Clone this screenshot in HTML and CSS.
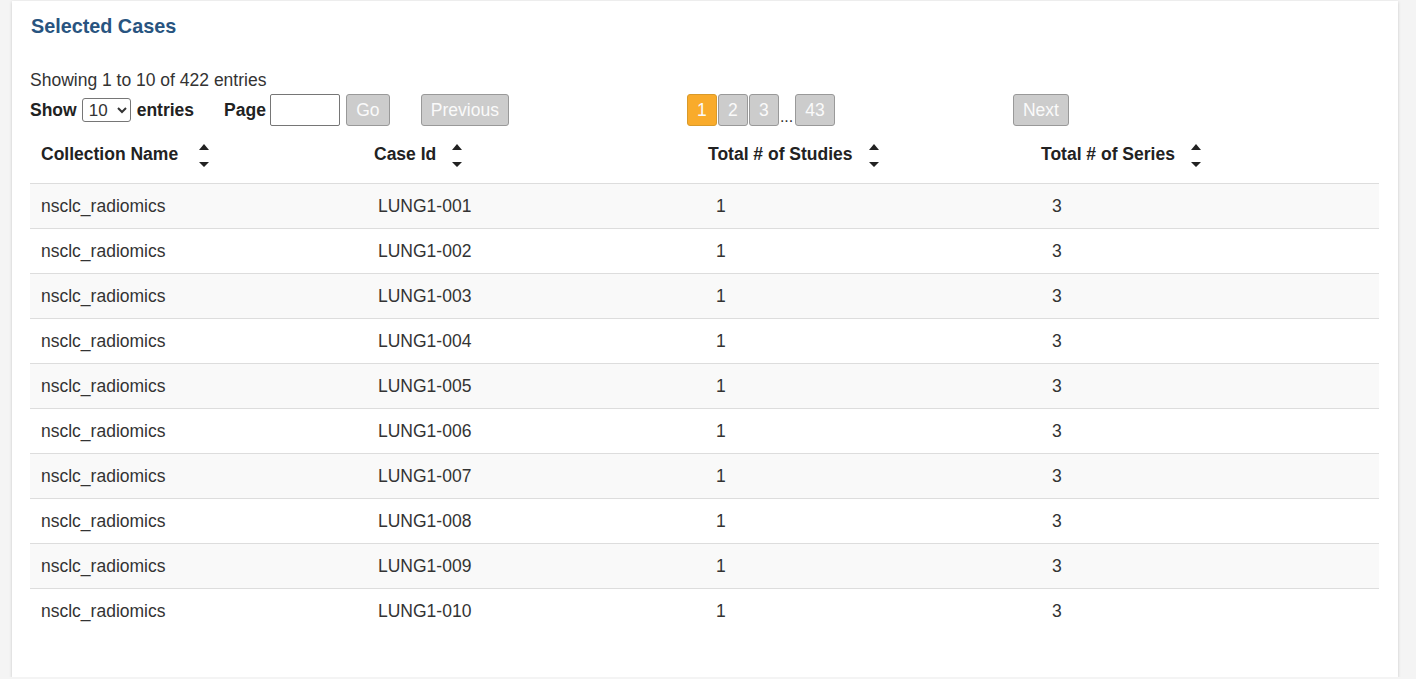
FILE: index.html
```html
<!DOCTYPE html>
<html lang="en">
<head>
<meta charset="utf-8">
<title>Selected Cases</title>
<link rel="stylesheet" href="styles.css">
</head>
<body>
<div class="card">
  <h2 class="title">Selected Cases</h2>
  <div class="info">Showing 1 to 10 of 422 entries</div>
  <div class="controls">
    <label class="lbl">Show</label>
    <select class="len"><option>10</option><option>25</option><option>50</option></select>
    <span class="lbl entries">entries</span>
    <span class="lbl page-lbl">Page</span>
    <input class="page-input" type="text">
    <button class="btn go">Go</button>
    <button class="btn prev">Previous</button>
    <div class="pages">
      <button class="btn pg active">1</button>
      <button class="btn pg">2</button>
      <button class="btn pg">3</button>
      <span class="ellipsis">...</span>
      <button class="btn pg wide">43</button>
    </div>
    <button class="btn next">Next</button>
  </div>
  <div class="table">
    <div class="row head">
      <div class="th c1">Collection Name<svg class="sort s1" width="10" height="24" viewBox="0 0 10 24"><path d="M5 0 L10 6 L0 6 Z M0 18 L10 18 L5 23 Z" fill="#222"/></svg></div>
      <div class="th c2">Case Id<svg class="sort" width="10" height="24" viewBox="0 0 10 24"><path d="M5 0 L10 6 L0 6 Z M0 18 L10 18 L5 23 Z" fill="#222"/></svg></div>
      <div class="th c3">Total # of Studies<svg class="sort" width="10" height="24" viewBox="0 0 10 24"><path d="M5 0 L10 6 L0 6 Z M0 18 L10 18 L5 23 Z" fill="#222"/></svg></div>
      <div class="th c4">Total # of Series<svg class="sort" width="10" height="24" viewBox="0 0 10 24"><path d="M5 0 L10 6 L0 6 Z M0 18 L10 18 L5 23 Z" fill="#222"/></svg></div>
    </div>
    <div class="row"><div class="td">nsclc_radiomics</div><div class="td">LUNG1-001</div><div class="td">1</div><div class="td">3</div></div>
    <div class="row"><div class="td">nsclc_radiomics</div><div class="td">LUNG1-002</div><div class="td">1</div><div class="td">3</div></div>
    <div class="row"><div class="td">nsclc_radiomics</div><div class="td">LUNG1-003</div><div class="td">1</div><div class="td">3</div></div>
    <div class="row"><div class="td">nsclc_radiomics</div><div class="td">LUNG1-004</div><div class="td">1</div><div class="td">3</div></div>
    <div class="row"><div class="td">nsclc_radiomics</div><div class="td">LUNG1-005</div><div class="td">1</div><div class="td">3</div></div>
    <div class="row"><div class="td">nsclc_radiomics</div><div class="td">LUNG1-006</div><div class="td">1</div><div class="td">3</div></div>
    <div class="row"><div class="td">nsclc_radiomics</div><div class="td">LUNG1-007</div><div class="td">1</div><div class="td">3</div></div>
    <div class="row"><div class="td">nsclc_radiomics</div><div class="td">LUNG1-008</div><div class="td">1</div><div class="td">3</div></div>
    <div class="row"><div class="td">nsclc_radiomics</div><div class="td">LUNG1-009</div><div class="td">1</div><div class="td">3</div></div>
    <div class="row"><div class="td">nsclc_radiomics</div><div class="td">LUNG1-010</div><div class="td">1</div><div class="td">3</div></div>
  </div>
</div>
</body>
</html>
```
FILE: styles.css
```css
html, body {
  margin: 0;
  padding: 0;
  background: #f4f4f4;
  font-family: "Liberation Sans", Arial, sans-serif;
  color: #333;
}
.card {
  box-sizing: border-box;
  margin: 1px 0 0 12px;
  width: 1386px;
  height: 676px;
  background: #fff;
  box-shadow: 0 1px 3px rgba(0, 0, 0, 0.18);
  padding: 14px 19px 0 18px;
}
.title {
  margin: 0 0 0 1px;
  font-size: 19.8px;
  line-height: 22px;
  font-weight: bold;
  color: #285480;
}
.info {
  margin-top: 33px;
  font-size: 17.5px;
  line-height: 20px;
  color: #333;
}
.controls {
  display: flex;
  align-items: center;
  height: 32px;
  margin-top: 4px;
}
.lbl {
  font-size: 17.5px;
  font-weight: bold;
  color: #222;
}
.len {
  margin-left: 5px;
  width: 49px;
  height: 24px;
  font-family: inherit;
  font-size: 17px;
  color: #333;
  border: 1px solid #767676;
  border-radius: 3px;
  background: #fff;
  padding: 0 0 0 2px;
}
.entries { margin-left: 6px; }
.page-lbl { margin-left: 30px; }
.page-input {
  box-sizing: border-box;
  margin-left: 4px;
  width: 70px;
  height: 32px;
  border: 1px solid #767676;
  border-radius: 2px;
  padding: 0 4px;
  font-size: 16px;
}
.btn {
  box-sizing: border-box;
  height: 32px;
  background: #cccccc;
  border: 1px solid #999;
  border-radius: 3px;
  color: #fafafa;
  font-family: inherit;
  font-size: 17.5px;
  padding: 0;
}
.go { margin-left: 6px; width: 44px; }
.prev { margin-left: 31px; width: 88px; }
.pages {
  display: flex;
  align-items: flex-end;
  gap: 1px;
  margin-left: 178px;
}
.pg { width: 30px; }
.pg.wide { width: 40px; }
.pg.active {
  background: #f9ab2b;
  border-color: #d99a2a;
}
.ellipsis {
  width: 14px;
  font-size: 16px;
  color: #333;
  line-height: 18px;
}
.next { margin-left: 178px; width: 56px; }
.table {
  margin-top: 7px;
  width: 1349px;
}
.row {
  display: grid;
  grid-template-columns: 337px 337px 337px 338px;
  height: 44px;
  align-items: center;
  border-bottom: 1px solid #dddddd;
  font-size: 17.5px;
}
.row:nth-child(even) { background: #f9f9f9; }
.row:last-child { border-bottom: none; }
.row.head {
  height: 50px;
  align-items: start;
  background: #fff;
}
.th {
  display: flex;
  align-items: center;
  padding-top: 11px;
  height: 20px;
  font-weight: bold;
  color: #222;
  white-space: nowrap;
}
.c1 { padding-left: 11px; }
.c2 { padding-left: 7px; }
.c3 { padding-left: 4px; }
.c4 { padding-left: 0; }
.sort { margin-left: 16px; margin-top: 3px; flex: none; }
.sort.s1 { margin-left: 21px; }
.td { padding-left: 11px; color: #333; }
.td:nth-child(2) { padding-left: 11px; }
.td:nth-child(3) { padding-left: 12px; }
.td:nth-child(4) { padding-left: 11px; }
```
